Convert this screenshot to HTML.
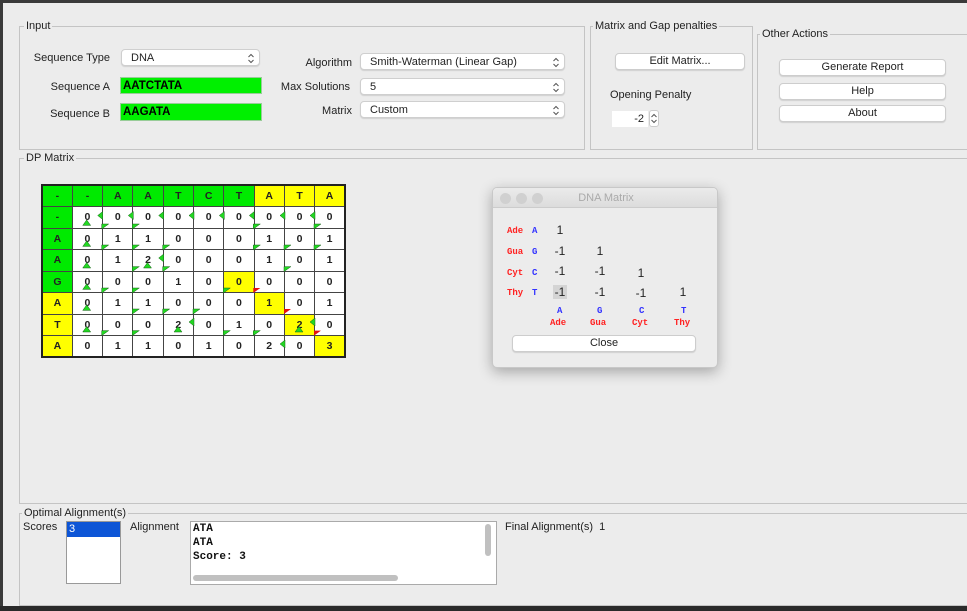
<!DOCTYPE html>
<html><head><meta charset="utf-8"><style>
*{box-sizing:border-box;margin:0;padding:0}
body{width:967px;height:611px;overflow:hidden;background:#ececec;font-family:"Liberation Sans",sans-serif;font-size:11px;color:#222;position:relative}
.a{position:absolute}
.grp{position:absolute;border:1px solid #c4c4c4}
.gl{position:absolute;background:#ececec;padding:0 2px;font-size:11px;color:#222;line-height:12px}
.dd{position:absolute;background:#fff;border:1px solid #cfcfcf;border-radius:4px;box-shadow:0 1px 1px rgba(0,0,0,.12);padding-left:9px;line-height:16px}
.dd svg{position:absolute;right:4px;top:3px}
.btn{position:absolute;background:#fff;border:1px solid #cdcdcd;border-radius:4px;box-shadow:0 1px 1px rgba(0,0,0,.12);text-align:center;line-height:15px}
.gf{position:absolute;background:#00f000;border:1px solid #9c9;font-weight:bold;color:#000;padding-left:2px;line-height:16px;font-size:11.5px}
.r{text-align:right}
table.g{position:absolute;left:41px;top:184px;border-collapse:collapse;table-layout:fixed;border:2px solid #222}
table.g td{border:1px solid #444;width:30.3px;height:21.5px;text-align:center;font-weight:bold;font-size:10.5px;color:#222;background:#fff;padding:0}
td.gr{background:#00ea00!important}
td.y{background:#ffff00!important}
.dlg{position:absolute;left:492px;top:187px;width:226px;height:181px;background:#ececec;border:1px solid #c8c8c8;border-radius:5px;box-shadow:0 4px 14px rgba(0,0,0,.3);overflow:hidden}
.mr{position:absolute;font-family:"Liberation Mono",monospace;font-weight:bold;font-size:9px}
.red{color:#f22}.blu{color:#33f}
.mv{position:absolute;font-size:12px;color:#222;width:30px;text-align:center}
</style></head><body>
<svg width="0" height="0" style="position:absolute"><defs><g id="ch"><path d="M1.5 4L4 1.5 6.5 4M1.5 7L4 9.5 6.5 7" fill="none" stroke="#555" stroke-width="1"/></g></defs></svg>
<div class="a" style="left:0;top:0;width:967px;height:3px;background:#3a3a3a"></div>
<div class="a" style="left:0;top:0;width:3px;height:611px;background:#3a3a3a"></div>
<div class="a" style="left:0;top:606px;width:967px;height:5px;background:#2a2a2a"></div>

<div class="grp" style="left:19px;top:26px;width:566px;height:124px"></div><div class="gl" style="left:24px;top:20px">Input</div>
<div class="a r" style="left:20px;top:52px;width:90px">Sequence Type</div>
<div class="dd" style="left:121px;top:49px;width:139px;height:17px">DNA<svg width="8" height="11"><use href="#ch"/></svg></div>
<div class="a r" style="left:20px;top:81px;width:90px">Sequence A</div>
<div class="gf" style="left:120px;top:77px;width:142px;height:17px">AATCTATA</div>
<div class="a r" style="left:20px;top:108px;width:90px">Sequence B</div>
<div class="gf" style="left:120px;top:103px;width:142px;height:18px">AAGATA</div>
<div class="a r" style="left:250px;top:57px;width:102px">Algorithm</div>
<div class="dd" style="left:360px;top:53px;width:205px;height:17px">Smith-Waterman (Linear Gap)<svg width="8" height="11"><use href="#ch"/></svg></div>
<div class="a r" style="left:250px;top:81px;width:100px">Max Solutions</div>
<div class="dd" style="left:360px;top:78px;width:205px;height:17px">5<svg width="8" height="11"><use href="#ch"/></svg></div>
<div class="a r" style="left:250px;top:105px;width:102px">Matrix</div>
<div class="dd" style="left:360px;top:101px;width:205px;height:17px">Custom<svg width="8" height="11"><use href="#ch"/></svg></div>

<div class="grp" style="left:590px;top:26px;width:163px;height:124px"></div><div class="gl" style="left:593px;top:20px">Matrix and Gap penalties</div>
<div class="btn" style="left:615px;top:53px;width:130px;height:17px">Edit Matrix...</div>
<div class="a" style="left:610px;top:89px">Opening Penalty</div>
<div class="a r" style="left:612px;top:111px;width:36px;height:16px;background:#fff;padding-right:4px;line-height:16px">-2</div>
<div class="a" style="left:649px;top:110px;width:10px;height:17px;border:1px solid #ccc;border-radius:3px;background:#fff"><svg width="8" height="15" style="position:absolute;left:0;top:2px"><use href="#ch"/></svg></div>

<div class="grp" style="left:757px;top:34px;width:212px;height:116px"></div><div class="gl" style="left:760px;top:28px">Other Actions</div>
<div class="btn" style="left:779px;top:59px;width:167px;height:17px">Generate Report</div>
<div class="btn" style="left:779px;top:83px;width:167px;height:17px">Help</div>
<div class="btn" style="left:779px;top:105px;width:167px;height:17px">About</div>

<div class="grp" style="left:19px;top:158px;width:950px;height:346px"></div><div class="gl" style="left:24px;top:152px">DP Matrix</div>

<table class="g">
<tr><td class="gr">-</td><td class="gr">-</td><td class="gr">A</td><td class="gr">A</td><td class="gr">T</td><td class="gr">C</td><td class="gr">T</td><td class="y">A</td><td class="y">T</td><td class="y">A</td></tr>
<tr><td class="gr">-</td><td>0</td><td>0</td><td>0</td><td>0</td><td>0</td><td>0</td><td>0</td><td>0</td><td>0</td></tr>
<tr><td class="gr">A</td><td>0</td><td>1</td><td>1</td><td>0</td><td>0</td><td>0</td><td>1</td><td>0</td><td>1</td></tr>
<tr><td class="gr">A</td><td>0</td><td>1</td><td>2</td><td>0</td><td>0</td><td>0</td><td>1</td><td>0</td><td>1</td></tr>
<tr><td class="gr">G</td><td>0</td><td>0</td><td>0</td><td>1</td><td>0</td><td class="y">0</td><td>0</td><td>0</td><td>0</td></tr>
<tr><td class="y">A</td><td>0</td><td>1</td><td>1</td><td>0</td><td>0</td><td>0</td><td class="y">1</td><td>0</td><td>1</td></tr>
<tr><td class="y">T</td><td>0</td><td>0</td><td>0</td><td>2</td><td>0</td><td>1</td><td>0</td><td class="y">2</td><td>0</td></tr>
<tr><td class="y">A</td><td>0</td><td>1</td><td>1</td><td>0</td><td>1</td><td>0</td><td>2</td><td>0</td><td class="y">3</td></tr>
</table>
<svg class="a" style="left:41px;top:184px" width="310" height="175" viewBox="0 0 310 175">
<g fill="#22d822" stroke="#186018" stroke-width=".5">
<path d="M56.7 31.5l5-4v8zM87.3 31.5l5-4v8zM117.7 31.5l5-4v8zM148 31.5l5-4v8zM178.3 31.5l5-4v8zM208.3 31.5l5-4v8zM239 31.5l5-4v8zM269 31.5l5-4v8z"/>
<path d="M117.7 74l5-4v8zM148 138l5-4v8zM269 138l5-4v8zM239 160l5-4v8z"/>
<path d="M41.7 41.4h8l-4-5.5zM41.7 62.4h8l-4-5.5zM41.7 84h8l-4-5.5zM41.7 105.4h8l-4-5.5zM41.7 126.4h8l-4-5.5zM41.7 148h8l-4-5.5zM102.5 84h8l-4-5.5zM133 148h8l-4-5.5zM254 148h8l-4-5.5z"/>
<path d="M60.7 40h7l-7 5zM91.3 40h7l-7 5zM212.3 40h7l-7 5zM273 40h7l-7 5z"/>
<path d="M60.7 61h7l-7 5zM91.3 61h7l-7 5zM121.7 61h7l-7 5zM212.3 61h7l-7 5zM243 61h7l-7 5zM273 61h7l-7 5z"/>
<path d="M91.3 82.6h7l-7 5zM121.7 82.6h7l-7 5zM243 82.6h7l-7 5z"/>
<path d="M60.7 104h7l-7 5zM91.3 104h7l-7 5zM182.3 104h7l-7 5z"/>
<path d="M91.3 125h7l-7 5zM121.7 125h7l-7 5zM152 125h7l-7 5z"/>
<path d="M60.7 146.6h7l-7 5zM91.3 146.6h7l-7 5zM182.3 146.6h7l-7 5zM212.3 146.6h7l-7 5z"/>
</g>
<g fill="#e41010"><path d="M212.3 104h7l-7 5zM243 125h7l-7 5zM273 146.6h7l-7 5z"/></g>
</svg>

<div class="dlg">
<div class="a" style="left:0;top:0;width:226px;height:20px;background:linear-gradient(#ebebeb,#dcdcdc);border-bottom:1px solid #ccc"></div>
<div class="a" style="left:7px;top:5px;width:11px;height:11px;border-radius:50%;background:#d0d0d0"></div>
<div class="a" style="left:23px;top:5px;width:11px;height:11px;border-radius:50%;background:#d0d0d0"></div>
<div class="a" style="left:39px;top:5px;width:11px;height:11px;border-radius:50%;background:#d0d0d0"></div>
<div class="a" style="left:0;top:4px;width:226px;text-align:center;color:#aaa">DNA Matrix</div>
<div class="mr red" style="left:14px;top:38px">Ade</div><div class="mr blu" style="left:39px;top:38px">A</div>
<div class="mr red" style="left:14px;top:59px">Gua</div><div class="mr blu" style="left:39px;top:59px">G</div>
<div class="mr red" style="left:14px;top:80px">Cyt</div><div class="mr blu" style="left:39px;top:80px">C</div>
<div class="mr red" style="left:14px;top:100px">Thy</div><div class="mr blu" style="left:39px;top:100px">T</div>
<div class="mv" style="left:52px;top:35px">1</div>
<div class="mv" style="left:52px;top:56px">-1</div><div class="mv" style="left:92px;top:56px">1</div>
<div class="mv" style="left:52px;top:76px">-1</div><div class="mv" style="left:92px;top:76px">-1</div><div class="mv" style="left:133px;top:78px">1</div>
<div class="mv" style="left:52px;top:97px"><span style="background:#d4d4d4;padding:0 2px">-1</span></div><div class="mv" style="left:92px;top:97px">-1</div><div class="mv" style="left:133px;top:98px">-1</div><div class="mv" style="left:175px;top:97px">1</div>
<div class="mr blu" style="left:64px;top:118px">A</div><div class="mr red" style="left:57px;top:130px">Ade</div>
<div class="mr blu" style="left:104px;top:118px">G</div><div class="mr red" style="left:97px;top:130px">Gua</div>
<div class="mr blu" style="left:146px;top:118px">C</div><div class="mr red" style="left:139px;top:130px">Cyt</div>
<div class="mr blu" style="left:188px;top:118px">T</div><div class="mr red" style="left:181px;top:130px">Thy</div>
<div class="btn" style="left:19px;top:147px;width:184px;height:17px">Close</div>
</div>

<div class="grp" style="left:19px;top:513px;width:950px;height:93px"></div><div class="gl" style="left:22px;top:507px">Optimal Alignment(s)</div>
<div class="a" style="left:23px;top:521px">Scores</div>
<div class="a" style="left:66px;top:521px;width:55px;height:63px;background:#fff;border:1px solid #999"></div>
<div class="a" style="left:67px;top:522px;width:53px;height:15px;background:#0d55d6;color:#fff;padding-left:2px;line-height:15px">3</div>
<div class="a" style="left:130px;top:521px">Alignment</div>
<div class="a" style="left:190px;top:521px;width:307px;height:64px;background:#fff;border:1px solid #aaa"></div>
<div class="a" style="left:193px;top:522px;font-family:'Liberation Mono',monospace;font-weight:bold;font-size:11px;line-height:14px;color:#111">ATA<br>ATA<br>Score: 3</div>
<div class="a" style="left:485px;top:524px;width:6px;height:32px;background:#c0c0c0;border-radius:3px"></div>
<div class="a" style="left:193px;top:575px;width:205px;height:6px;background:#c0c0c0;border-radius:3px"></div>
<div class="a" style="left:505px;top:521px">Final Alignment(s)&nbsp; 1</div>
</body></html>
